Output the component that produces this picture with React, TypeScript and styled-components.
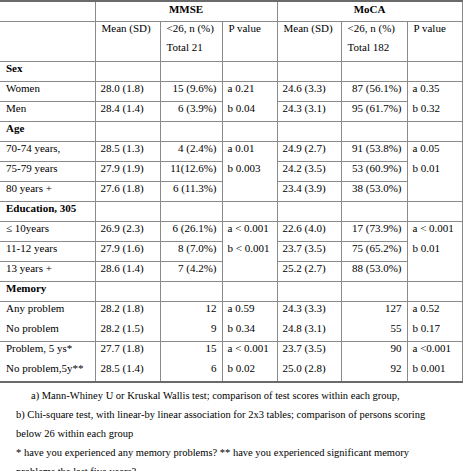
import styled, { createGlobalStyle } from "styled-components";

const GlobalStyle = createGlobalStyle`
  html, body {
    margin: 0;
    padding: 0;
    background: #ffffff;
    overflow: hidden;
  }
  body {
    font-family: "Liberation Serif", "Times New Roman", serif;
    color: #000;
  }
`;

const Page = styled.div`
  width: 474px;
`;

const Table = styled.table`
  width: 462px;
  font-size: 11px;
  border-collapse: collapse;
  table-layout: fixed;
  border-top: 2px solid #6a6a6a;
  border-bottom: 2px solid #6a6a6a;
  border-right: 1px solid #8a8a8a;
`;

const Cell = styled.td<{ $align?: "left" | "right"; $open?: boolean; $bold?: boolean }>`
  padding: 0 ${(p) => (p.$align === "right" ? "5px" : "0")} 7px ${(p) => (p.$align === "right" ? "0" : "5px")};
  text-align: ${(p) => p.$align || "left"};
  vertical-align: top;
  line-height: 12px;
  white-space: nowrap;
  font-weight: ${(p) => (p.$bold ? "bold" : "normal")};
  border-left: 1px solid #8a8a8a;
  border-top: 1px solid ${(p) => (p.$open ? "transparent" : "#8a8a8a")};
  &:first-child {
    border-left: none;
    padding-left: 6px;
  }
`;

const PCellBox = styled.td`
  padding: 0 0 0 5px;
  vertical-align: top;
  white-space: nowrap;
  border-left: 1px solid #8a8a8a;
  border-top: 1px solid #8a8a8a;
`;

const PLine = styled.div`
  line-height: 12px;
  padding-bottom: 8px;
  &:last-child {
    padding-bottom: 0;
  }
`;

const HeadTitle = styled.th`
  font-weight: bold;
  text-align: center;
  line-height: 12px;
  padding: 1px 0 6px;
  border-left: 1px solid #8a8a8a;
  border-bottom: 1px solid #8a8a8a;
  &:first-child {
    border-left: none;
  }
`;

const HeadCell = styled.th`
  font-weight: normal;
  text-align: left;
  vertical-align: top;
  padding: 0 0 1px 6px;
  white-space: nowrap;
  border-left: 1px solid #8a8a8a;
  &:first-child {
    border-left: none;
  }
`;

const HeadLine = styled.div`
  line-height: 12px;
  padding-bottom: 7px;
`;

const Notes = styled.div`
  margin-top: 3px;
  font-size: 10.5px;
`;

const Note = styled.div<{ $indent: number }>`
  padding-left: ${(p) => p.$indent}px;
  line-height: 19px;
  white-space: nowrap;
`;

type Row = [string, string, string, string, string];

interface Block {
  rows: Row[];
  pMmse: string[];
  pMoca: string[];
  joined?: boolean;
}

interface Section {
  title: string;
  blocks: Block[];
}

const sections: Section[] = [
  {
    title: "Sex",
    blocks: [
      {
        rows: [
          ["Women", "28.0 (1.8)", "15 (9.6%)", "24.6 (3.3)", "87 (56.1%)"],
          ["Men", "28.4 (1.4)", "6 (3.9%)", "24.3 (3.1)", "95 (61.7%)"],
        ],
        pMmse: ["a 0.21", "b 0.04"],
        pMoca: ["a 0.35", "b 0.32"],
      },
    ],
  },
  {
    title: "Age",
    blocks: [
      {
        rows: [
          ["70-74 years,", "28.5 (1.3)", "4 (2.4%)", "24.9 (2.7)", "91 (53.8%)"],
          ["75-79 years", "27.9 (1.9)", "11(12.6%)", "24.2 (3.5)", "53 (60.9%)"],
          ["80 years +", "27.6 (1.8)", "6 (11.3%)", "23.4 (3.9)", "38 (53.0%)"],
        ],
        pMmse: ["a 0.01", "b 0.003"],
        pMoca: ["a 0.05", "b 0.01"],
      },
    ],
  },
  {
    title: "Education, 305",
    blocks: [
      {
        rows: [
          ["≤ 10years", "26.9 (2.3)", "6 (26.1%)", "22.6 (4.0)", "17 (73.9%)"],
          ["11-12 years", "27.9 (1.6)", "8 (7.0%)", "23.7 (3.5)", "75 (65.2%)"],
          ["13 years +", "28.6 (1.4)", "7 (4.2%)", "25.2 (2.7)", "88 (53.0%)"],
        ],
        pMmse: ["a < 0.001", "b < 0.001"],
        pMoca: ["a < 0.001", "b 0.01"],
      },
    ],
  },
  {
    title: "Memory",
    blocks: [
      {
        rows: [
          ["Any problem", "28.2 (1.8)", "12", "24.3 (3.3)", "127"],
          ["No problem", "28.2 (1.5)", "9", "24.8 (3.1)", "55"],
        ],
        pMmse: ["a 0.59", "b 0.34"],
        pMoca: ["a 0.52", "b 0.17"],
        joined: true,
      },
      {
        rows: [
          ["Problem, 5 ys*", "27.7 (1.8)", "15", "23.7 (3.5)", "90"],
          ["No problem,5y**", "28.5 (1.4)", "6", "25.0 (2.8)", "92"],
        ],
        pMmse: ["a < 0.001", "b 0.02"],
        pMoca: ["a <0.001", "b 0.001"],
        joined: true,
      },
    ],
  },
];

const PCell = ({ lines, span }: { lines: string[]; span: number }) => (
  <PCellBox rowSpan={span}>
    {lines.map((l) => (
      <PLine key={l}>{l}</PLine>
    ))}
  </PCellBox>
);

const App = () => {
  return (
    <Page>
      <GlobalStyle />
      <Table>
        <colgroup>
          <col style={{ width: 95 }} />
          <col style={{ width: 65 }} />
          <col style={{ width: 62 }} />
          <col style={{ width: 55 }} />
          <col style={{ width: 64 }} />
          <col style={{ width: 66 }} />
          <col style={{ width: 55 }} />
        </colgroup>
        <thead>
          <tr>
            <HeadTitle />
            <HeadTitle colSpan={3}>MMSE</HeadTitle>
            <HeadTitle colSpan={3}>MoCA</HeadTitle>
          </tr>
          <tr>
            <HeadCell />
            <HeadCell>
              <HeadLine>Mean (SD)</HeadLine>
            </HeadCell>
            <HeadCell>
              <HeadLine>&lt;26, n (%)</HeadLine>
              <HeadLine>Total 21</HeadLine>
            </HeadCell>
            <HeadCell>
              <HeadLine>P value</HeadLine>
            </HeadCell>
            <HeadCell>
              <HeadLine>Mean (SD)</HeadLine>
            </HeadCell>
            <HeadCell>
              <HeadLine>&lt;26, n (%)</HeadLine>
              <HeadLine>Total 182</HeadLine>
            </HeadCell>
            <HeadCell>
              <HeadLine>P value</HeadLine>
            </HeadCell>
          </tr>
        </thead>
        <tbody>
          {sections.map((s) => [
            <tr key={s.title}>
              <Cell $bold>{s.title}</Cell>
              <Cell />
              <Cell />
              <Cell />
              <Cell />
              <Cell />
              <Cell />
            </tr>,
            ...s.blocks.flatMap((b, bi) =>
              b.rows.map((r, ri) => {
                const open = b.joined && ri > 0;
                return (
                  <tr key={`${s.title}-${bi}-${ri}`}>
                    <Cell $open={open}>{r[0]}</Cell>
                    <Cell $open={open}>{r[1]}</Cell>
                    <Cell $open={open} $align="right">
                      {r[2]}
                    </Cell>
                    {ri === 0 && <PCell lines={b.pMmse} span={b.rows.length} />}
                    <Cell $open={open}>{r[3]}</Cell>
                    <Cell $open={open} $align="right">
                      {r[4]}
                    </Cell>
                    {ri === 0 && <PCell lines={b.pMoca} span={b.rows.length} />}
                  </tr>
                );
              })
            ),
          ])}
        </tbody>
      </Table>
      <Notes>
        <Note $indent={31}>a) Mann-Whiney U or Kruskal Wallis test; comparison of test scores within each group,</Note>
        <Note $indent={16}>
          b) Chi-square test, with linear-by linear association for 2x3 tables; comparison of persons scoring
        </Note>
        <Note $indent={16}>below 26 within each group</Note>
        <Note $indent={16}>
          * have you experienced any memory problems? ** have you experienced significant memory
        </Note>
        <Note $indent={16}>problems the last five years?</Note>
      </Notes>
    </Page>
  );
};

export default App;
